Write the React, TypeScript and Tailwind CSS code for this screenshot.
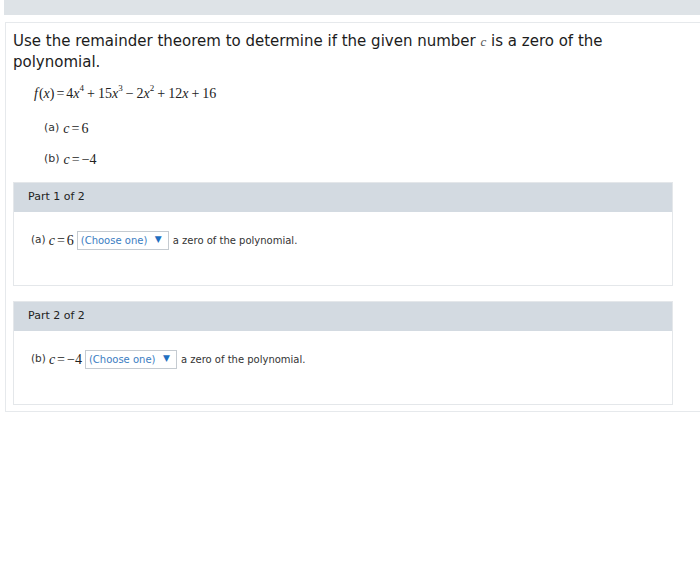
import React from 'react'

const sans = "font-['DejaVu_Sans',Verdana,sans-serif]"
const serif = "font-['Liberation_Serif','Times_New_Roman',serif]"

function MathC({ value }: { value: string }) {
  return (
    <span className={`${serif} whitespace-nowrap text-[14px] text-[#222]`}>
      <i>c</i>
      <span className="mx-[2px]">=</span>
      {value}
    </span>
  )
}

function ChooseOne() {
  return (
    <span className="inline-flex h-[19px] w-[92px] items-center justify-between whitespace-nowrap border border-[#c5cbd1] bg-white pl-[3px] pr-[6px] text-[10px] text-[#3a7dc2]">
      <span>(Choose one)</span>
      <span className="text-[9px] text-[#1f6fc1]">▼</span>
    </span>
  )
}

function PartBox({ part, label, value }: { part: number; label: string; value: string }) {
  return (
    <div className="ml-[7px] w-[660px] border border-[#e4e7ea] bg-white">
      <div className="flex h-[29px] items-center bg-[#d3dae1] pl-[14px] text-[11px] text-[#222]">
        Part {part} of 2
      </div>
      <div className="flex h-[73px] items-start pl-[17px] pt-[18px]">
        <div className="flex h-[20px] items-center whitespace-nowrap text-[10px] text-[#333]">
          <span className="mr-[3px] text-[10.5px]">({label})</span>
          <MathC value={value} />
          <span className="ml-[3px] mr-[4px] flex">
            <ChooseOne />
          </span>
          <span>a zero of the polynomial.</span>
        </div>
      </div>
    </div>
  )
}

export default function App() {
  return (
    <div className={`h-[583px] w-[700px] overflow-hidden bg-white ${sans}`}>
      <div className="ml-[4px] h-[15px] bg-[#dee3e7]" />
      <div className="ml-[5px] mt-[7px] border border-r-0 border-[#e6e9ec] bg-white pb-[6px] pt-[8px]">
        <p className="px-[7px] text-[15px] leading-[20px] text-[#1c1c1c]">
          Use the remainder theorem to determine if the given number{' '}
          <i className={`${serif} text-[13px] text-[#555]`}>c</i> is a zero of the polynomial.
        </p>

        <div className={`${serif} ml-[28px] mt-[11px] flex h-[20px] items-center whitespace-nowrap text-[14px] text-[#222]`}>
          <i>f</i>
          <span className="ml-[1px]">(</span>
          <i>x</i>
          <span>)</span>
          <span className="mx-[2px]">=</span>
          4<i>x</i>
          <span className="-mt-[9px] text-[9px]">4</span>
          <span className="mx-[3px]">+</span>
          15<i>x</i>
          <span className="-mt-[9px] text-[9px]">3</span>
          <span className="mx-[3px]">−</span>
          2<i>x</i>
          <span className="-mt-[9px] text-[9px]">2</span>
          <span className="mx-[3px]">+</span>
          12<i>x</i>
          <span className="mx-[3px]">+</span>
          16
        </div>

        <div className="ml-[38px] mt-[15px] flex h-[20px] items-center text-[11px] text-[#333]">
          <span className="mr-[4px]">(a)</span>
          <MathC value="6" />
        </div>
        <div className="ml-[38px] mt-[11px] flex h-[20px] items-center text-[11px] text-[#333]">
          <span className="mr-[4px]">(b)</span>
          <MathC value="−4" />
        </div>

        <div className="mt-[13px]">
          <PartBox part={1} label="a" value="6" />
        </div>
        <div className="mt-[15px]">
          <PartBox part={2} label="b" value="−4" />
        </div>
      </div>
    </div>
  )
}
